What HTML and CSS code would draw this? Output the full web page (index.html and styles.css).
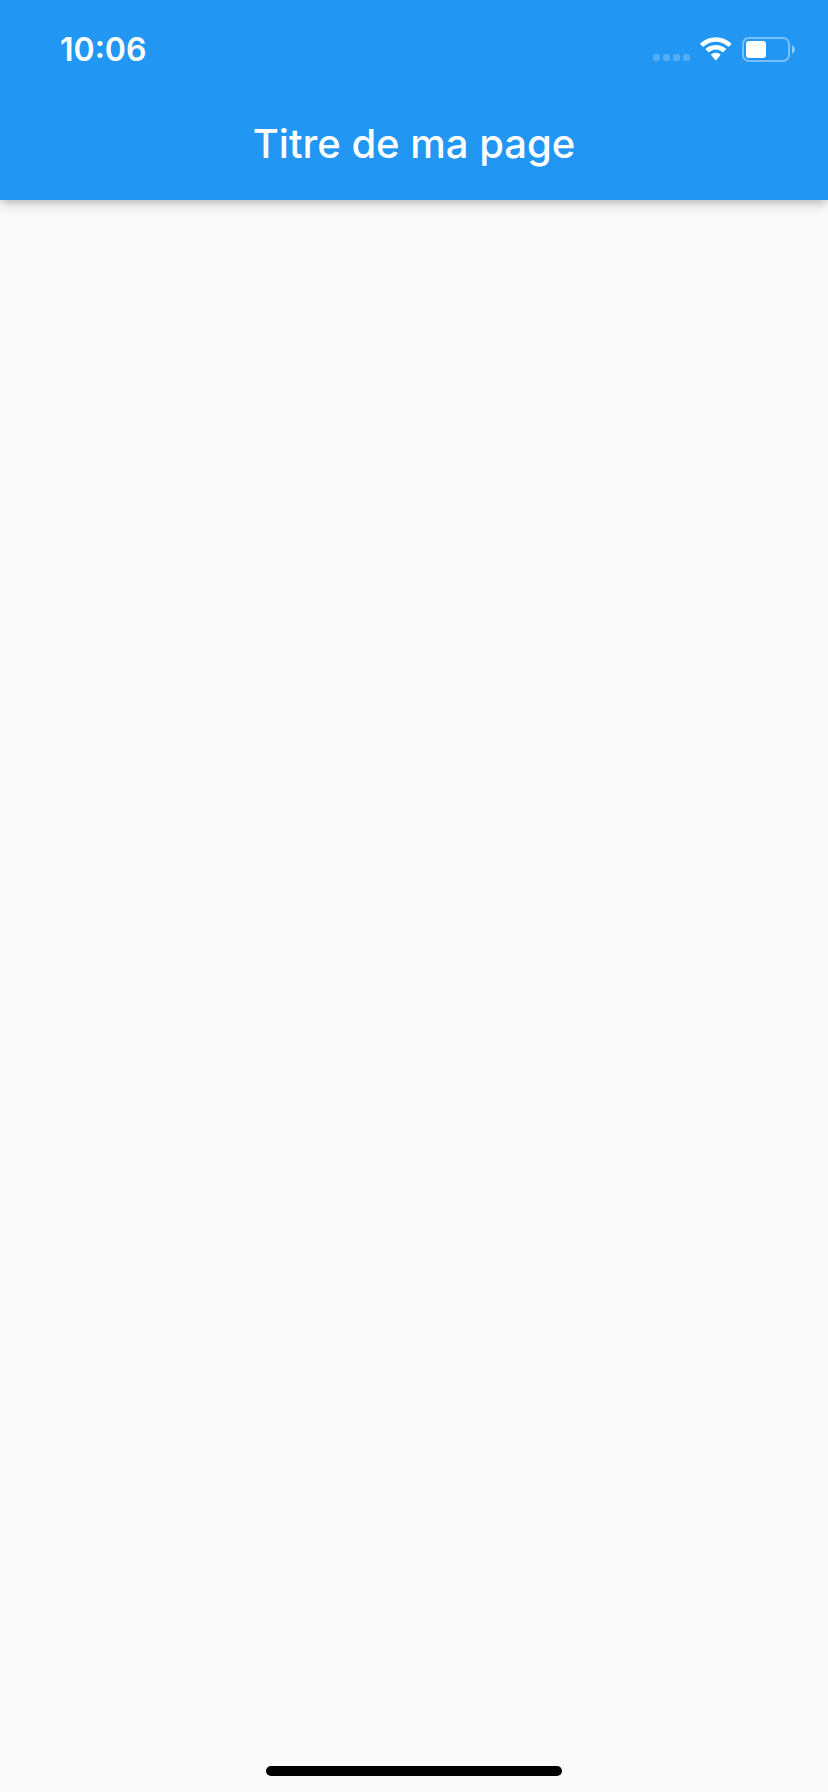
FILE: index.html
```html
<!DOCTYPE html>
<html lang="fr">
<head>
  <meta charset="utf-8">
  <meta name="viewport" content="width=device-width, initial-scale=1">
  <title>Titre de ma page</title>
  <link rel="stylesheet" href="styles.css">
</head>
<body class="screen">
  <header class="header">
    <div class="status-bar">
      <time class="clock">10:06</time>
      <div class="indicators">
        <svg class="signal" width="37" height="26" viewBox="0 0 37 26" aria-hidden="true">
          <rect x="0" y="17" width="7" height="7" rx="2"/>
          <rect x="10" y="17" width="7" height="7" rx="2"/>
          <rect x="20" y="17" width="7" height="7" rx="2"/>
          <rect x="30" y="17" width="7" height="7" rx="2"/>
        </svg>
        <svg class="wifi" width="32" height="26" viewBox="0 0 32 26" aria-hidden="true">
          <path d="M0.3 7.2Q-.1 6.7.4 6.2C4.7 2.2 10 .2 15.8.2S26.900 2.200 31.200 6.200Q31.700 6.700 31.300 7.200L28.900 9.500Q28.400 10 27.900 9.500C24.500 6.400 20.300 4.800 15.800 4.800S7.100 6.400 3.700 9.500Q3.200 10 2.700 9.500Z"/>
          <path d="M5.800 12.600Q5.300 12.100 5.800 11.600C8.600 9.100 12.100 7.900 15.800 7.900S23 9.100 25.800 11.600Q26.300 12.100 25.800 12.600L23.300 15.100Q22.800 15.600 22.300 15.100C20.500 13.500 18.200 12.600 15.800 12.600S11.100 13.500 9.300 15.100Q8.800 15.600 8.300 15.100Z"/>
          <path d="M11.300 18.200Q10.800 17.700 11.400 17.200C12.700 16.200 14.200 15.700 15.800 15.700S18.900 16.200 20.200 17.200Q20.800 17.700 20.300 18.200L16.400 22.900Q15.800 23.500 15.200 22.900Z"/>
        </svg>
        <svg class="battery" width="53" height="26" viewBox="0 0 53 26" aria-hidden="true">
          <rect class="battery-shell" x="1" y="1" width="46" height="23" rx="6"/>
          <path class="battery-tip" d="M50 8.300C51.700 9 53 10.500 53 12.500S51.700 16 50 16.700Z"/>
          <rect x="4" y="4" width="20" height="17" rx="3"/>
        </svg>
      </div>
    </div>
    <h1 class="title">Titre de ma page</h1>
  </header>
  <main class="content"></main>
  <footer class="footer">
    <div class="home-indicator"></div>
  </footer>
</body>
</html>
```
FILE: styles.css
```css
.screen {
  display: flex;
  flex-direction: column;
  min-height: 100vh;
  margin: 0;
  background: #fafafa;
  font-family: Inter, "Liberation Sans", sans-serif;
}

.header {
  background: #2196f3;
  color: #fff;
  box-shadow:
    0 4px 8px -2px rgba(0, 0, 0, 0.16),
    0 6px 10px 0 rgba(0, 0, 0, 0.08),
    0 2px 18px 0 rgba(0, 0, 0, 0.06);
}

.status-bar {
  display: flex;
  align-items: center;
  justify-content: space-between;
  box-sizing: border-box;
  height: 88px;
  padding: 12px 33px 0 60px;
}

.clock {
  font-size: 32px;
  font-weight: 600;
  line-height: 40px;
}

.indicators {
  display: flex;
  gap: 10px;
  fill: #fff;
}

.signal {
  opacity: 0.22;
}

.battery-shell {
  fill: none;
  stroke: #fff;
  stroke-width: 2;
  opacity: 0.4;
}

.battery-tip {
  opacity: 0.5;
}

.title {
  margin: 0;
  font-size: 40px;
  font-weight: 500;
  line-height: 112px;
  text-align: center;
}

.content {
  flex: 1;
}

.footer {
  display: flex;
  justify-content: center;
  padding-bottom: 16px;
}

.home-indicator {
  width: 296px;
  height: 10px;
  border-radius: 5px;
  background: #000;
}
```
